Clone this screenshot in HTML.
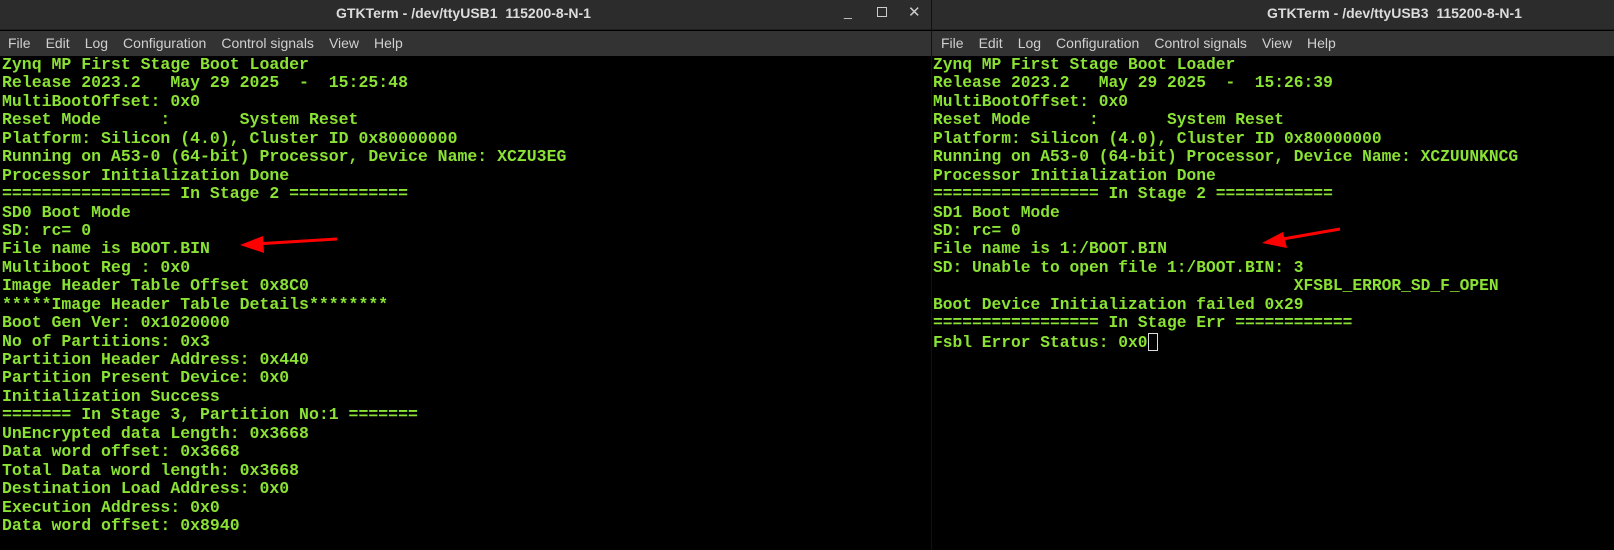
<!DOCTYPE html>
<html><head><meta charset="utf-8"><style>
*{margin:0;padding:0;box-sizing:border-box}
body{width:1614px;height:550px;background:#000;overflow:hidden;position:relative;font-family:"Liberation Sans",sans-serif}
.win{position:absolute;top:0;height:550px;background:#000;overflow:hidden}
.title{position:absolute;left:0;right:0;top:0;height:30px;background:#2c2c2c;border-bottom:1px solid #1e1e1e;color:#dcdcdc;font-weight:bold;font-size:14px;line-height:26px}
.menu{position:absolute;left:0;right:0;top:31px;height:25px;background:#333;color:#d0d0d0;font-size:14px;line-height:24px}
.menu span{margin-right:15px}
pre{position:absolute;top:56px;font-family:"Liberation Mono",monospace;font-weight:bold;color:#8ae234;line-height:18.44px}
.cur{display:inline-block;width:10px;height:18px;border:1px solid #ddd;vertical-align:-4px}
</style></head><body>
<div class="win" style="left:0;width:931px">
 <div class="title"><span style="position:absolute;left:336px">GTKTerm - /dev/ttyUSB1&nbsp;&nbsp;115200-8-N-1</span>
  <span style="position:absolute;left:844px;top:-2px;font-weight:normal;color:#ccc">_</span>
  <span style="position:absolute;left:877px;top:7px;width:10px;height:10px;border:1px solid #ccc"></span>
  <span style="position:absolute;left:908px;top:0;font-weight:normal;color:#ccc;font-size:15px">✕</span></div>
 <div class="menu" style="padding-left:8px"><span>File</span><span>Edit</span><span>Log</span><span>Configuration</span><span>Control signals</span><span>View</span><span>Help</span></div>
 <pre style="left:2px;font-size:16.5px">Zynq MP First Stage Boot Loader
Release 2023.2   May 29 2025  -  15:25:48
MultiBootOffset: 0x0
Reset Mode      :       System Reset
Platform: Silicon (4.0), Cluster ID 0x80000000
Running on A53-0 (64-bit) Processor, Device Name: XCZU3EG
Processor Initialization Done
================= In Stage 2 ============
SD0 Boot Mode
SD: rc= 0
File name is BOOT.BIN
Multiboot Reg : 0x0
Image Header Table Offset 0x8C0
*****Image Header Table Details********
Boot Gen Ver: 0x1020000
No of Partitions: 0x3
Partition Header Address: 0x440
Partition Present Device: 0x0
Initialization Success
======= In Stage 3, Partition No:1 =======
UnEncrypted data Length: 0x3668
Data word offset: 0x3668
Total Data word length: 0x3668
Destination Load Address: 0x0
Execution Address: 0x0
Data word offset: 0x8940</pre>
 <svg style="position:absolute;left:0;top:0" width="931" height="550"><line x1="337" y1="239" x2="255" y2="244" stroke="#f00" stroke-width="3"/><polygon points="240,245 263,236 264,253" fill="#f00"/></svg>
</div>
<div style="position:absolute;left:931px;top:0;width:1px;height:550px;background:#111"></div>
<div class="win" style="left:932px;width:682px">
 <div class="title"><span style="position:absolute;left:335px">GTKTerm - /dev/ttyUSB3&nbsp;&nbsp;115200-8-N-1</span></div>
 <div class="menu" style="padding-left:9px"><span>File</span><span>Edit</span><span>Log</span><span>Configuration</span><span>Control signals</span><span>View</span><span>Help</span></div>
 <pre style="left:1px;font-size:16.25px">Zynq MP First Stage Boot Loader
Release 2023.2   May 29 2025  -  15:26:39
MultiBootOffset: 0x0
Reset Mode      :       System Reset
Platform: Silicon (4.0), Cluster ID 0x80000000
Running on A53-0 (64-bit) Processor, Device Name: XCZUUNKNCG
Processor Initialization Done
================= In Stage 2 ============
SD1 Boot Mode
SD: rc= 0
File name is 1:/BOOT.BIN
SD: Unable to open file 1:/BOOT.BIN: 3
                                     XFSBL_ERROR_SD_F_OPEN
Boot Device Initialization failed 0x29
================= In Stage Err ============
Fsbl Error Status: 0x0<span class="cur"></span></pre>
 <svg style="position:absolute;left:0;top:0" width="682" height="550"><line x1="408" y1="229" x2="345" y2="240" stroke="#f00" stroke-width="3"/><polygon points="330,243 351,232 355,248" fill="#f00"/></svg>
</div>
</body></html>
